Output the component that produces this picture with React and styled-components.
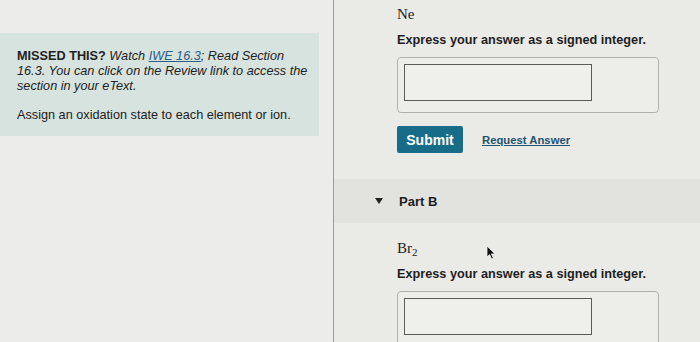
import React from 'react';
import styled, { createGlobalStyle } from 'styled-components';

const GlobalStyle = createGlobalStyle`
    html, body {
        margin: 0;
        padding: 0;
        background: #ebebe8;
    }
    body {
        font-family: "Liberation Sans", Arial, sans-serif;
        color: #1d1d1d;
    }
`

const Page = styled.div`
    display: flex;
    width: 700px;
    height: 342px;
    overflow: hidden;
    position: relative;
    background: #eaeae7;
`

const LeftPane = styled.div`
    width: 319px;
    padding: 33px 14px 0 0;
    border-right: 1px solid #9c9c9a;
    background: #ececea;
`

const HintBox = styled.div`
    background: #d7e3df;
    padding: 16px 5px 13px 17px;
    font-size: 12.7px;
    line-height: 15px;
    color: #222;

    p {
        margin: 0;
    }
    p + p {
        margin-top: 14px;
    }
    b {
        font-weight: 700;
    }
    em {
        font-style: italic;
    }
    a {
        color: #2b5d86;
        text-decoration: underline;
    }
`

const RightPane = styled.div`
    flex: 1;
    display: flex;
    flex-direction: column;

    & > * {
        flex-shrink: 0;
    }
`

const PartBody = styled.div`
    padding: ${p => p.$top}px 0 0 63px;
`

const Formula = styled.div`
    font-family: "Liberation Serif", "Times New Roman", serif;
    font-size: 15px;
    line-height: 20px;
    color: #222;

    sub {
        font-size: 11px;
        vertical-align: -3px;
        line-height: 0;
    }
`

const Instruction = styled.div`
    margin-top: 8px;
    font-size: 12.7px;
    line-height: 16px;
    font-weight: 700;
    color: #1e1e1e;
`

const AnswerBox = styled.div`
    margin-top: 9px;
    width: 254px;
    height: 48px;
    padding: 6px 0 0 6px;
    border: 1px solid #b0b0ad;
    border-radius: 4px;
    background: #ededea;
`

const Input = styled.div`
    width: 186px;
    height: 35px;
    border: 1.5px solid #5a5a58;
    background: #efefec;
`

const Actions = styled.div`
    display: flex;
    align-items: center;
    gap: 19px;
    margin-top: 13px;
`

const SubmitButton = styled.button`
    width: 66px;
    height: 27px;
    border: none;
    border-radius: 2px;
    background: #176d88;
    color: #fff;
    font-family: "Liberation Sans", Arial, sans-serif;
    font-size: 14px;
    font-weight: 700;
    padding: 0;
`

const RequestLink = styled.a`
    font-size: 11.3px;
    font-weight: 700;
    color: #22536f;
    text-decoration: underline;
    margin-top: 1px;
`

const PartHeader = styled.div`
    display: flex;
    align-items: center;
    gap: 16px;
    margin-top: 26px;
    height: 44px;
    padding-left: 41px;
    background: #e2e2de;
    font-size: 13px;
    font-weight: 700;
    color: #1d1d1d;
`

const Caret = styled.span`
    width: 0;
    height: 0;
    border-left: 4px solid transparent;
    border-right: 4px solid transparent;
    border-top: 6px solid #222;
`

const Cursor = styled.svg`
    position: absolute;
    left: 486px;
    top: 245px;
`

function Part({ top, formula, children }) {
    return (
        <PartBody $top={top}>
            <Formula>{formula}</Formula>
            <Instruction>Express your answer as a signed integer.</Instruction>
            <AnswerBox>
                <Input />
            </AnswerBox>
            {children}
        </PartBody>
    )
}

export default function App() {
    return (
        <>
            <GlobalStyle />
            <Page>
                <LeftPane>
                    <HintBox>
                        <p>
                            <b>MISSED THIS?</b> <em>Watch <a>IWE 16.3</a>; Read Section 16.3. You can click on the Review link to access the section in your eText.</em>
                        </p>
                        <p>Assign an oxidation state to each element or ion.</p>
                    </HintBox>
                </LeftPane>
                <RightPane>
                    <Part top={4} formula="Ne">
                        <Actions>
                            <SubmitButton type="button">Submit</SubmitButton>
                            <RequestLink>Request Answer</RequestLink>
                        </Actions>
                    </Part>
                    <PartHeader>
                        <Caret />
                        <span>Part B</span>
                    </PartHeader>
                    <Part top={15} formula={<>Br<sub>2</sub></>} />
                </RightPane>
                <Cursor width="11" height="15" viewBox="0 0 11 15">
                    <path d="M1 1 L1 12 L3.6 9.6 L5.6 14 L7.4 13.2 L5.4 8.9 L9 8.9 Z" fill="#111" stroke="#f4f4f2" strokeWidth="0.8" />
                </Cursor>
            </Page>
        </>
    )
}
